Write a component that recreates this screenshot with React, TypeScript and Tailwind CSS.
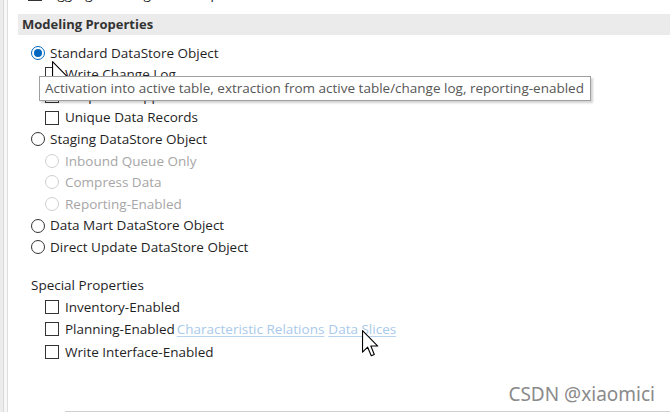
import React from 'react';

type Kind = 'radio' | 'check';

function Radio({ checked = false, disabled = false }: { checked?: boolean; disabled?: boolean }) {
  return (
    <span
      className={`flex h-[14px] w-[14px] shrink-0 items-center justify-center rounded-full border bg-white ${
        checked ? 'border-[#0067c0]' : disabled ? 'border-[#cfcfcf]' : 'border-[#333333]'
      }`}
    >
      {checked && <span className="h-[8px] w-[8px] rounded-full bg-[#0067c0]" />}
    </span>
  );
}

function Check() {
  return <span className="h-[14px] w-[14px] shrink-0 border border-[#333333] bg-white" />;
}

function Row({
  kind,
  label,
  indent,
  checked,
  disabled,
}: {
  kind: Kind;
  label: string;
  indent: 'top' | 'sub';
  checked?: boolean;
  disabled?: boolean;
}) {
  return (
    <div
      className={`flex h-[21.6px] items-center ${indent === 'top' ? 'pl-[22px] gap-[5px]' : 'pl-[36px] gap-[6px]'}`}
    >
      {kind === 'radio' ? <Radio checked={checked} disabled={disabled} /> : <Check />}
      <span className={`whitespace-nowrap ${disabled ? 'text-[#a6a6a6]' : 'text-[#1f1f1f]'}`}>{label}</span>
    </div>
  );
}

function Cursor({ className }: { className: string }) {
  return (
    <svg className={className} width="19" height="27" viewBox="0 0 12.5 19.5">
      <path
        d="M0.5 0.5 L0.5 16 L4.2 12.4 L6.8 18.6 L9 17.7 L6.5 11.6 L11.5 11.6 Z"
        fill="#ffffff"
        stroke="#000000"
        strokeWidth="0.8"
        strokeLinejoin="round"
      />
    </svg>
  );
}

export default function App() {
  return (
    <div
      className="relative flex h-[412px] w-[670px] overflow-hidden bg-white text-[13.5px]"
      style={{ fontFamily: '"Open Sans", "Noto Sans", sans-serif' }}
    >
      {/* left pane edge */}
      <div className="flex w-[9px] shrink-0">
        <div className="w-[3px] bg-[#ececec]" />
        <div className="w-[1px] bg-[#d9d9d9]" />
        <div className="w-[3px] bg-[#f7f7f7]" />
        <div className="w-[1px] bg-[#dedede]" />
      </div>

      <div className="min-w-0 flex-1">
        {/* row scrolled off the top */}
        <div className="h-[14px] overflow-hidden">
          <div className="mt-[-13px] flex h-[14px] items-center gap-[7px] pl-[19px]">
            <Check />
            <span className="whitespace-nowrap text-[#1f1f1f]">Aggregation Log Data Snapshot</span>
          </div>
        </div>

        <div className="ml-[9px] flex h-[21px] items-center bg-[#ebebeb] pl-[4px]">
          <span className="text-[13px] font-bold text-[#333333]">Modeling Properties</span>
        </div>

        <div className="mt-[7px]">
          <Row kind="radio" indent="top" label="Standard DataStore Object" checked />
          <Row kind="check" indent="sub" label="Write Change Log" />
          <Row kind="check" indent="sub" label="Snapshot Support" />
          <Row kind="check" indent="sub" label="Unique Data Records" />
          <Row kind="radio" indent="top" label="Staging DataStore Object" />
          <Row kind="radio" indent="sub" label="Inbound Queue Only" disabled />
          <Row kind="radio" indent="sub" label="Compress Data" disabled />
          <Row kind="radio" indent="sub" label="Reporting-Enabled" disabled />
          <Row kind="radio" indent="top" label="Data Mart DataStore Object" />
          <Row kind="radio" indent="top" label="Direct Update DataStore Object" />
        </div>

        <div className="mt-[16px]">
          <div className="flex h-[22px] items-center pl-[22px] text-[#1f1f1f]">Special Properties</div>
          <div className="flex h-[22.3px] items-center gap-[6px] pl-[36px]">
            <Check />
            <span className="text-[#1f1f1f]">Inventory-Enabled</span>
          </div>
          <div className="flex h-[22.3px] items-center gap-[6px] pl-[36px]">
            <Check />
            <span className="text-[#1f1f1f]">Planning-Enabled</span>
            <span className="ml-[-4px] whitespace-nowrap text-[#a9c9ea] underline decoration-[#b9d4ef] underline-offset-2">
              Characteristic Relations
            </span>
            <span className="ml-[-2px] whitespace-nowrap text-[#a9c9ea] underline decoration-[#b9d4ef] underline-offset-2">
              Data Slices
            </span>
          </div>
          <div className="flex h-[22.3px] items-center gap-[6px] pl-[36px]">
            <Check />
            <span className="text-[#1f1f1f]">Write Interface-Enabled</span>
          </div>
        </div>

        {/* table header peeking in at the bottom */}
        <div className="ml-[56px] mt-[48px] flex h-[20px] border-t-2 border-[#cfcfcf]">
          <div className="w-[51px] border-l border-[#bdbdbd]" />
          <div className="w-[57px] border-l border-[#d0d0d0]" />
          <div className="flex-1 border-l border-[#d0d0d0]" />
        </div>
      </div>

      <Cursor className="absolute left-[51px] top-[61px]" />

      {/* tooltip */}
      <div className="absolute left-[39px] top-[76px] flex h-[25px] items-center border border-[#a0a0a0] bg-white pl-[5px] pr-[6px] text-[#575757] shadow-[2px_2px_2px_rgba(0,0,0,0.18)]">
        <span className="whitespace-nowrap">
          Activation into active table, extraction from active table/change log, reporting-enabled
        </span>
      </div>

      <Cursor className="absolute left-[361px] top-[330px]" />

      <div
        className="absolute right-[15px] top-[380px] text-[19px] text-[#8a8a8a]"
        style={{ fontFamily: '"Noto Sans", sans-serif' }}
      >
        CSDN @xiaomici
      </div>
    </div>
  );
}
